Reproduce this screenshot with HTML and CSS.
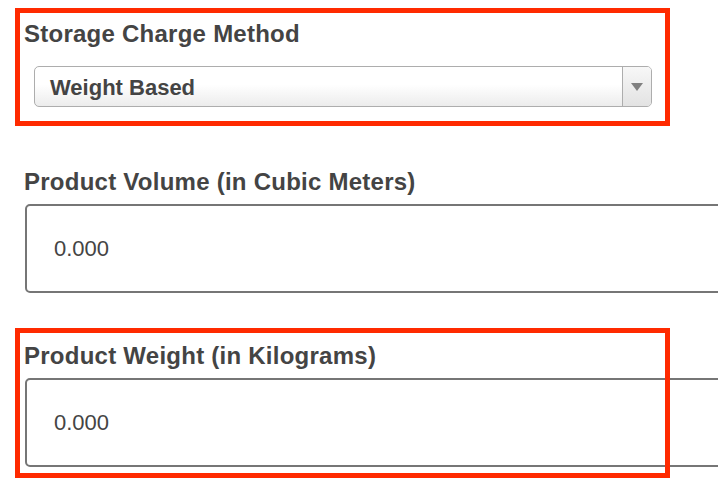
FILE: index.html
```html
<!DOCTYPE html>
<html lang="en">
<head>
    <meta charset="UTF-8">
    <meta name="viewport" content="width=device-width, initial-scale=1.0">
    <title>Storage Charges</title>
    <link rel="stylesheet" href="styles.css">
</head>
<body>
    <div class="form">
        <!-- Storage charge method -->
        <div class="field flag flag-method">
            <label class="field-label">Storage Charge Method</label>
            <div class="select">
                <span class="select-value">Weight Based</span>
                <span class="select-arrow"></span>
            </div>
        </div>

        <!-- Volume -->
        <div class="field field-volume">
            <label class="field-label" for="volume">Product Volume (in Cubic Meters)</label>
            <input id="volume" class="text-input" type="text" value="0.000">
        </div>

        <!-- Weight -->
        <div class="field flag flag-weight">
            <label class="field-label" for="weight">Product Weight (in Kilograms)</label>
            <input id="weight" class="text-input" type="text" value="0.000">
        </div>
    </div>
</body>
</html>
```

FILE: styles.css
```css
/* General */
body {
    margin: 0;
    min-height: 100vh;
    background: #ffffff;
    color: #444444;
    font-family: "Liberation Sans", Arial, Helvetica, sans-serif;
    overflow: hidden;
}

.form {
    display: flex;
    flex-direction: column;
    padding: 20px 0 30px 24px;
}

/* Fields */
.field {
    display: flex;
    flex-direction: column;
    align-items: flex-start;
}

.field-label {
    font-size: 24px;
    line-height: 28px;
    font-weight: bold;
    letter-spacing: 0.25px;
    color: #444444;
}

.field-volume {
    margin-top: 61px;
}

.flag-weight {
    margin-top: 49px;
}

/* Select box */
.select {
    display: flex;
    align-items: stretch;
    box-sizing: border-box;
    width: 618px;
    height: 41px;
    margin: 18px 0 0 10px;
    border: 1px solid #adadad;
    border-radius: 5px;
    background: linear-gradient(#ffffff, #ffffff 45%, #ececec);
    overflow: hidden;
}

.select-value {
    flex: 1;
    display: flex;
    align-items: center;
    padding: 3px 0 0 15px;
    font-size: 22px;
    font-weight: bold;
    color: #444444;
}

.select-arrow {
    width: 28px;
    display: flex;
    align-items: center;
    justify-content: center;
    border-left: 1px solid #adadad;
    background: linear-gradient(#f7f7f7, #e3e3e3);
}

.select-arrow::before {
    content: "";
    border-left: 6px solid transparent;
    border-right: 6px solid transparent;
    border-top: 8px solid #808080;
    margin-top: 1px;
}

/* Text inputs */
.text-input {
    box-sizing: border-box;
    width: 720px;
    height: 89px;
    margin: 8px 0 0 1px;
    padding: 0 27px;
    border: 2px solid #767676;
    border-radius: 5px;
    font-family: inherit;
    font-size: 22px;
    color: #444444;
    background: #ffffff;
    outline: none;
}

/* Red review markers */
.flag {
    position: relative;
}

.flag::after {
    content: "";
    position: absolute;
    left: -9px;
    width: 655px;
    box-sizing: border-box;
    border: 5px solid #ff2a00;
    pointer-events: none;
}

.flag-method::after {
    top: -12px;
    bottom: -19px;
}

.flag-weight::after {
    top: -14px;
    bottom: -11px;
}
```
